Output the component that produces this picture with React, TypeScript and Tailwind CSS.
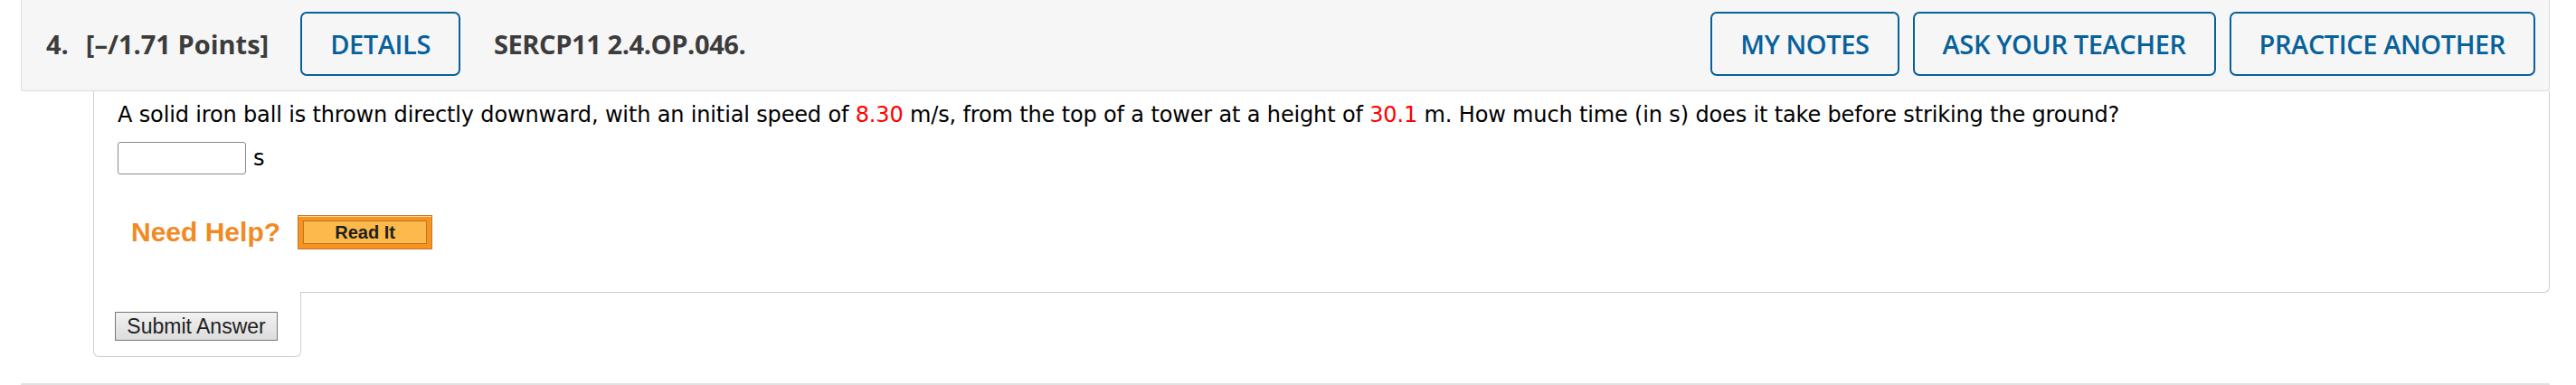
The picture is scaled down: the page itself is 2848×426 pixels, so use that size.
import React from 'react';

const OutlineButton: React.FC<{ label: string }> = ({ label }) => (
  <button className="h-[71px] px-[31px] border-[2.5px] border-[#07619a] rounded-[7px] text-[#07619a] text-[29px] font-semibold leading-none tracking-[-0.4px] bg-transparent">
    {label}
  </button>
);

const Red: React.FC<{ children: React.ReactNode }> = ({ children }) => (
  <span className="text-[#ff0000]">{children}</span>
);

export default function App() {
  return (
    <div className="w-[2848px] h-[426px] bg-white overflow-hidden">
      <div className="ml-[23px] w-[2796px]">
        {/* question header */}
        <div className="flex items-center h-[101px] pt-[12px] pb-[15px] pl-[27px] pr-[15px] bg-[#f6f6f6] border border-t-0 border-[#dcdcdc] rounded-b-[4px] font-['Open_Sans',sans-serif] text-[#3c3c3c]">
          <span className="text-[29px] font-bold">4.</span>
          <span className="ml-[19px] text-[29px] font-bold">[–/1.71 Points]</span>
          <div className="ml-[35px]">
            <OutlineButton label="DETAILS" />
          </div>
          <span className="ml-[37px] text-[29px] font-bold tracking-[-0.4px]">SERCP11 2.4.OP.046.</span>
          <div className="flex-1" />
          <div className="flex gap-[15px]">
            <OutlineButton label="MY NOTES" />
            <OutlineButton label="ASK YOUR TEACHER" />
            <OutlineButton label="PRACTICE ANOTHER" />
          </div>
        </div>

        {/* question body */}
        <div className="ml-[80px] w-[2716px] h-[223px] border-l border-r border-b border-[#cfcfcf] rounded-br-[6px] pl-[26px] pt-[8px] font-['DejaVu_Sans',sans-serif] text-black">
          <p className="text-[24px] leading-[36px] tracking-[-0.15px]">
            A solid iron ball is thrown directly downward, with an initial speed of <Red>8.30</Red> m/s, from the top of a tower at a height of <Red>30.1</Red> m. How much time (in s) does it take before striking the ground?
          </p>
          <div className="flex items-center mt-[12px] gap-[8px]">
            <input
              type="text"
              className="w-[142px] h-[36px] border border-[#8a8a8a] rounded-[3px] bg-white"
            />
            <span className="text-[24px] leading-none">s</span>
          </div>
          <div className="flex items-center mt-[45px] ml-[15px] gap-[19px] font-['Liberation_Sans',Arial,sans-serif]">
            <span className="text-[30px] font-bold text-[#f08a24] leading-none">Need Help?</span>
            <button className="w-[149px] h-[38px] p-[5px] bg-[#f7931e] border border-[#c0782a] shadow-[inset_0_1px_0_#ffd9a0]">
              <div className="w-full h-full flex items-center justify-center bg-[#fdb94b] border border-[#b5762c] text-[20px] font-bold text-[#1e1e1e] leading-none">
                Read It
              </div>
            </button>
          </div>
        </div>

        {/* submit tab */}
        <div className="relative ml-[80px] -mt-px w-[230px] h-[72px] bg-white border border-t-0 border-[#cfcfcf] rounded-b-[6px] pl-[23px] pt-[22px]">
          <button className="w-[180px] h-[32px] border border-[#777] bg-gradient-to-b from-[#f2f2f2] to-[#dcdcdc] font-['Liberation_Sans',Arial,sans-serif] text-[23px] text-[#222] leading-none">
            Submit Answer
          </button>
        </div>

        <div className="mt-[29px] h-[2px] bg-[#e2e2e2]" />
      </div>
    </div>
  );
}
